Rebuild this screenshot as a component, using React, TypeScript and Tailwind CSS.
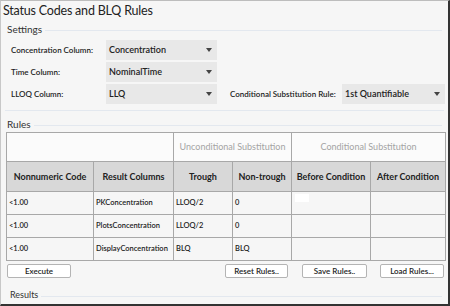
import React from 'react';

const font = { fontFamily: 'Lato, "Open Sans", sans-serif' };

function Select({ value, className = '' }: { value: string; className?: string }) {
  return (
    <div
      className={`h-[20px] bg-[#e8e8e8] flex items-center justify-between pl-[3px] pr-[5px] text-[9px] font-semibold text-[#222] ${className}`}
    >
      <span>{value}</span>
      <svg width="6" height="4" viewBox="0 0 6 4">
        <path d="M0 0h6L3 4z" fill="#444" />
      </svg>
    </div>
  );
}

function GroupHeader({ label }: { label: string }) {
  return (
    <div className="flex items-center gap-[3px] pl-[6px] pr-[6px]">
      <span className="text-[10px] text-[#333] leading-none">{label}</span>
      <div className="flex-1 h-px bg-[#e3e8ef] mt-[3px]" />
    </div>
  );
}

function Button({ label, className = '' }: { label: string; className?: string }) {
  return (
    <button
      className={`h-[14px] bg-white border border-[#b4b4b4] rounded-[2px] text-[8px] font-semibold text-[#222] leading-none ${className}`}
    >
      {label}
    </button>
  );
}

const rows = [
  ['<1.00', 'PKConcentration', 'LLOQ/2', '0'],
  ['<1.00', 'PlotsConcentration', 'LLOQ/2', '0'],
  ['<1.00', 'DisplayConcentration', 'BLQ', 'BLQ'],
];

export default function App() {
  return (
    <div
      className="w-[450px] h-[306px] bg-[#f6f6f6] border-l border-l-[#c8c8c8] border-t border-t-[#bdbdbd] border-r-2 border-r-[#333] border-b-2 border-b-[#333] overflow-hidden flex flex-col"
      style={font}
    >
      <div className="pl-[2px] pt-[1px] h-[20px] text-[12.5px] tracking-[-0.2px] text-[#222] leading-[18px]">
        Status Codes and BLQ Rules
      </div>

      <div className="mt-[3px]">
        <GroupHeader label="Settings" />
      </div>

      <div className="flex flex-col gap-[2px] mt-[6px] pl-[10px] pr-[3px]">
        <div className="flex items-center">
          <span className="w-[95px] text-[8px] font-semibold text-[#222]">Concentration Column:</span>
          <Select value="Concentration" className="w-[111px]" />
        </div>
        <div className="flex items-center">
          <span className="w-[95px] text-[8px] font-semibold text-[#222]">Time Column:</span>
          <Select value="NominalTime" className="w-[111px]" />
        </div>
        <div className="flex items-center">
          <span className="w-[95px] text-[8px] font-semibold text-[#222]">LLOQ Column:</span>
          <Select value="LLQ" className="w-[111px]" />
          <span className="ml-[13px] w-[112px] whitespace-nowrap text-[8px] font-semibold text-[#222]">
            Conditional Substitution Rule:
          </span>
          <Select value="1st Quantifiable" className="w-[103px]" />
        </div>
      </div>

      <div className="mx-[4px] mt-[6px] h-px bg-[#e3e8ef]" />

      <div className="mt-[8px]">
        <GroupHeader label="Rules" />
      </div>

      <div className="mt-[3px] pl-[5px]">
        <table className="border-collapse table-fixed border border-[#a8a8a8] text-[#222]" style={{ width: 439 }}>
          <colgroup>
            <col style={{ width: 87 }} />
            <col style={{ width: 80 }} />
            <col style={{ width: 59 }} />
            <col style={{ width: 59 }} />
            <col style={{ width: 79 }} />
            <col style={{ width: 75 }} />
          </colgroup>
          <thead>
            <tr className="h-[29px] bg-[#fbfbfb]">
              <th colSpan={2} className="border-r border-[#a8a8a8]" />
              <th colSpan={2} className="border-r border-[#a8a8a8] text-[9px] font-normal text-[#a4a4a4]">
                Unconditional Substitution
              </th>
              <th colSpan={2} className="text-[9px] font-normal text-[#a4a4a4]">
                Conditional Substitution
              </th>
            </tr>
            <tr className="h-[30px] bg-[#d8d8d8] text-[9px] font-bold">
              <th className="border border-[#a8a8a8]">Nonnumeric Code</th>
              <th className="border border-[#a8a8a8]">Result Columns</th>
              <th className="border border-[#a8a8a8]">Trough</th>
              <th className="border border-[#a8a8a8]">Non-trough</th>
              <th className="border border-[#a8a8a8]">Before Condition</th>
              <th className="border border-[#a8a8a8]">After Condition</th>
            </tr>
          </thead>
          <tbody>
            {rows.map((r, i) => (
              <tr key={i} className="h-[23px] text-[7.5px] font-semibold">
                {r.map((c, j) => (
                  <td key={j} className="border border-[#a8a8a8] px-[2px] align-middle whitespace-nowrap">
                    {c}
                  </td>
                ))}
                <td className="border border-[#a8a8a8] px-[3px] align-top">
                  {i === 0 && <div className="w-[14px] h-[8px] bg-white mt-[2px]" />}
                </td>
                <td className="border border-[#a8a8a8]" />
              </tr>
            ))}
          </tbody>
        </table>
      </div>

      <div className="flex items-center mt-[3px] pl-[6px] pr-[4px]">
        <Button label="Execute" className="w-[64px]" />
        <div className="flex-1" />
        <Button label="Reset Rules.." className="w-[63px]" />
        <Button label="Save Rules.." className="w-[65px] ml-[14px]" />
        <Button label="Load Rules..." className="w-[64px] ml-[13px]" />
      </div>

      <div className="mt-[12px] flex items-center gap-[3px] pl-[9px] pr-[6px]">
        <span className="text-[9px] text-[#333] leading-none">Results</span>
        <div className="flex-1 h-px bg-[#e3e8ef] mt-[3px]" />
      </div>
    </div>
  );
}
